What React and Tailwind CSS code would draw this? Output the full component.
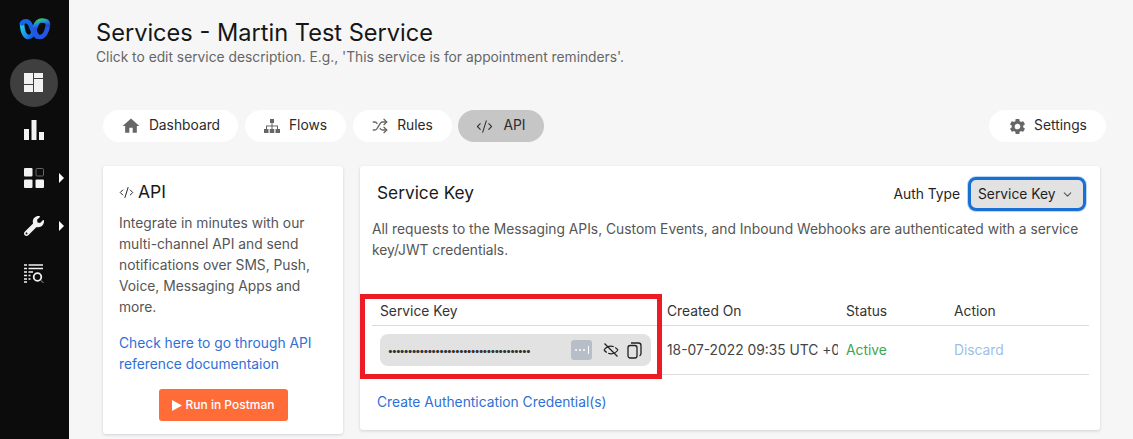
import { ChevronDown, CodeXml, Shuffle } from 'lucide-react';
import { FaWrench } from 'react-icons/fa';

const Logo = () => (
  <svg width="32" height="24" viewBox="0 0 32 24" fill="none">
    <defs>
      <linearGradient id="lg1" x1="0" y1="0" x2="1" y2="0.6">
        <stop offset="0" stopColor="#22d0e8" />
        <stop offset="0.6" stopColor="#1a8cf0" />
        <stop offset="1" stopColor="#1450e0" />
      </linearGradient>
      <linearGradient id="lg2" x1="0" y1="0" x2="0.6" y2="1">
        <stop offset="0" stopColor="#35d05a" />
        <stop offset="0.45" stopColor="#1f8fd8" />
        <stop offset="1" stopColor="#2340d8" />
      </linearGradient>
    </defs>
    <path d="M3 6.500C3.500 15 6 20 10 20c5 0 6-11 8-13.500" stroke="url(#lg1)" strokeWidth="4.500" strokeLinecap="round" />
    <path d="M3 6.500C5 3.500 9 3.500 11 7c2 3.500 3 10 7 12.500" stroke="#1565e6" strokeWidth="4.500" strokeLinecap="round" />
    <path d="M29 7c-.5 7-3.500 13-8 13-4 0-5.500-6-7-10" stroke="#2456e4" strokeWidth="4.500" strokeLinecap="round" />
    <path d="M16 10c1-4 4-6.500 7-6.500s6 1 6 4" stroke="url(#lg2)" strokeWidth="4.500" strokeLinecap="round" />
  </svg>
);

const DashIcon = () => (
  <svg width="20" height="20" viewBox="0 0 20 20" fill="#f2f2f2">
    <rect x="0" y="0" width="9" height="11" />
    <rect x="10" y="0" width="9" height="5" />
    <rect x="0" y="12" width="9" height="7" />
    <rect x="10" y="6" width="9" height="13" />
  </svg>
);

const ChartIcon = () => (
  <svg width="20" height="20" viewBox="0 0 20 20" fill="#f2f2f2">
    <rect x="0" y="9" width="5" height="11" />
    <rect x="7.500" y="0" width="5" height="20" />
    <rect x="15" y="12" width="5" height="8" />
  </svg>
);

const AppsIcon = () => (
  <svg width="20" height="20" viewBox="0 0 20 20" fill="#f2f2f2">
    <rect x="0" y="0" width="8.500" height="8.500" rx="1" />
    <rect x="12" y="0.500" width="7.500" height="7.500" rx="1" fill="none" stroke="#666" />
    <rect x="0" y="11.500" width="8.500" height="8.500" rx="1" />
    <rect x="11.500" y="11.500" width="8.500" height="8.500" rx="1" />
  </svg>
);

const LogSearchIcon = () => (
  <svg width="20" height="20" viewBox="0 0 20 20" fill="none" stroke="#f2f2f2">
    <path d="M0 1h3M4.500 1H19M0 4.500h3M4.500 4.500H19M0 8h3M4.500 8h4.500M0 11.500h3M4.500 11.500h2M0 15h3M4.500 15h2M0 18h3" strokeWidth="1.500" />
    <circle cx="13.500" cy="13" r="3.800" strokeWidth="1.800" />
    <path d="M16.500 16l3 3" strokeWidth="1" stroke="#999" />
  </svg>
);

const HomeIcon = () => (
  <svg width="20" height="20" viewBox="0 0 24 24" fill="#666" className="mr-[8px]">
    <path d="M10 20v-6h4v6h5v-8h3L12 3 2 12h3v8z" />
  </svg>
);

const GearIcon = () => (
  <svg width="19" height="19" viewBox="0 0 24 24" fill="#666" className="mr-[7px]">
    <path d="M19.140 12.940c.04-.3.06-.61.060-.94 0-.32-.02-.64-.07-.94l2.030-1.580a.49.49 0 0 0 .12-.61l-1.920-3.320a.49.49 0 0 0-.59-.22l-2.390.96c-.5-.38-1.030-.7-1.620-.94l-.36-2.540a.484.484 0 0 0-.48-.41h-3.840c-.24 0-.43.17-.47.41l-.36 2.540c-.59.24-1.130.57-1.620.94l-2.390-.96c-.22-.08-.47 0-.59.22L2.740 8.870c-.12.21-.08.47.12.61l2.030 1.580c-.05.3-.09.63-.09.94s.02.64.07.94l-2.030 1.580a.49.49 0 0 0-.12.61l1.920 3.320c.12.22.37.29.59.22l2.390-.96c.5.38 1.030.7 1.620.94l.36 2.540c.05.24.24.41.48.41h3.840c.24 0 .44-.17.47-.41l.36-2.540c.59-.24 1.130-.56 1.620-.94l2.390.96c.22.08.47 0 .59-.22l1.920-3.320c.12-.22.07-.47-.12-.61l-2.010-1.580zM12 15.600A3.610 3.610 0 0 1 8.400 12c0-1.980 1.620-3.600 3.600-3.600s3.600 1.620 3.600 3.600-1.620 3.600-3.600 3.600z" />
  </svg>
);

const FlowsIcon = () => (
  <svg width="16" height="16" viewBox="0 0 16 16" fill="#666" className="mr-[9px]">
    <rect x="6" y="1" width="4" height="4" />
    <rect x="0" y="11" width="4.500" height="4" />
    <rect x="5.750" y="11" width="4.500" height="4" />
    <rect x="11.500" y="11" width="4.500" height="4" />
    <path d="M7.500 5h1v2.500h5.500V11h-1V8.500H8.500V11h-1V8.500H3V11H2V7.500h5.500z" />
  </svg>
);

const MaskIcon = () => (
  <div className="flex h-[20px] w-[21px] items-center justify-center rounded-[3px] bg-[#b8bec8]">
    <span className="flex items-center gap-[2px]">
      <span className="h-[2px] w-[2px] rounded-full bg-white" />
      <span className="h-[2px] w-[2px] rounded-full bg-white" />
      <span className="h-[2px] w-[2px] rounded-full bg-white" />
      <span className="ml-[1px] h-[8px] w-[1px] bg-white" />
    </span>
  </div>
);

const EyeSlash = () => (
  <svg width="16" height="16" viewBox="0 0 16 16" fill="none" stroke="#222" strokeWidth="1.200" className="ml-[11px]">
    <path d="M1 8c2-2.600 4.300-3.800 7-3.800 1 0 1.900.2 2.800.5M15 8c-2 2.600-4.300 3.800-7 3.800-1 0-1.900-.2-2.800-.5M1 8c.9 1.100 1.800 1.900 2.800 2.500M15 8c-.9-1.100-1.800-1.900-2.800-2.500" />
    <path d="M1.500 1.500l13 13" />
  </svg>
);

const CopyIcon = () => (
  <svg width="15" height="17" viewBox="0 0 15 17" fill="none" stroke="#222" strokeWidth="1.300" className="ml-[8px]">
    <rect x="1" y="3.500" width="9" height="12.500" rx="2.200" />
    <path d="M4 1h7.500C13 1 14 2 14 3.500v8c0 1.100-.6 2-1.500 2.300" />
  </svg>
);

const Tab = ({ icon, label, active, className = '' }) => (
  <div
    className={`flex h-[32px] items-center justify-center rounded-full text-[13.800px] text-[#2b2b2b] ${
      active ? 'bg-[#c6c6c6]' : 'bg-white'
    } ${className}`}
  >
    {icon}
    <span className="pb-[1px]">{label}</span>
  </div>
);

const SideItem = ({ children, caret, className = '' }) => (
  <div className={`relative flex w-full items-center justify-center pr-[1px] ${className}`}>
    {children}
    {caret && (
      <span className="absolute left-[59px] top-1/2 h-0 w-0 -translate-y-1/2 border-y-[5px] border-l-[5px] border-y-transparent border-l-white" />
    )}
  </div>
);

export default function App() {
  return (
    <div className="relative flex h-[439px] w-[1133px] overflow-hidden bg-[#f6f6f7] font-['Inter',sans-serif] text-[#1f1f1f]">
      <aside className="flex w-[69px] shrink-0 flex-col items-center bg-[#0c0c0c] pt-[17px]">
        <Logo />
        <SideItem className="mt-[18px]">
          <div className="flex h-[48px] w-[48px] items-center justify-center rounded-full bg-[#3f3f3f]">
            <DashIcon />
          </div>
        </SideItem>
        <SideItem className="mt-[13px]"><ChartIcon /></SideItem>
        <SideItem caret className="mt-[28px]"><AppsIcon /></SideItem>
        <SideItem caret className="mt-[28px]">
          <FaWrench size={20} color="#f2f2f2" />
        </SideItem>
        <SideItem className="mt-[28px]"><LogSearchIcon /></SideItem>
      </aside>

      <main className="flex min-w-0 flex-1 flex-col">
        <header className="pl-[27px] pt-[17px]">
          <h1 className="text-[23.600px] leading-[32px] text-[#161616]">Services - Martin Test Service</h1>
          <p className="text-[13.800px] leading-[17px] text-[#666]">
            Click to edit service description. E.g., 'This service is for appointment reminders'.
          </p>
        </header>

        <nav className="mt-[44px] flex items-center pl-[34px] pr-[27px]">
          <Tab className="w-[135px]" label="Dashboard" icon={<HomeIcon />} />
          <Tab className="ml-[7px] w-[101px]" label="Flows" icon={<FlowsIcon />} />
          <Tab className="ml-[7px] w-[99px]" label="Rules" icon={<Shuffle size={16} color="#666" className="mr-[9px]" />} />
          <Tab active className="ml-[6px] w-[86px]" label="API" icon={<CodeXml size={17} color="#333" strokeWidth={1.500} className="mr-[10px]" />} />
          <Tab className="ml-auto w-[117px]" label="Settings" icon={<GearIcon />} />
        </nav>

        <div className="mt-[24px] flex items-start pl-[34px]">
          <section className="h-[268px] w-[240px] rounded-[3px] bg-white px-[16px] pt-[16px] shadow-[0_1px_3px_rgba(60,60,90,0.2)]">
            <h2 className="flex items-center text-[17.500px] leading-[20px] text-[#1a1a1a]">
              <CodeXml size={15} strokeWidth={1.500} className="mr-[4px]" />
              API
            </h2>
            <p className="mt-[11px] text-[13.800px] leading-[21px] text-[#555]">
              Integrate in minutes with our multi-channel API and send notifications over SMS, Push, Voice, Messaging Apps and more.
            </p>
            <a className="mt-[15px] block text-[13.800px] leading-[21px] text-[#2f6fd6]">
              Check here to go through API reference documentaion
            </a>
            <div className="mt-[14px] flex justify-center">
              <div className="flex h-[32px] w-[129px] items-center justify-center rounded-[3px] bg-[#ff6c37] text-[12px] font-medium text-white">
                <svg width="10" height="11" viewBox="0 0 10 11" fill="white" className="mr-[4px]">
                  <path d="M0 0l10 5.500L0 11z" />
                </svg>
                Run in Postman
              </div>
            </div>
          </section>

          <section className="ml-[17px] h-[264px] w-[740px] rounded-[3px] bg-white pl-[12px] pr-[11px] pt-[11px] shadow-[0_1px_3px_rgba(60,60,90,0.2)]">
            <div className="flex items-center justify-between pl-[5px] pr-[3px]">
              <h2 className="pb-[3px] text-[17.300px] text-[#1a1a1a]">Service Key</h2>
              <div className="flex items-center">
                <span className="mr-[8px] text-[13.800px]">Auth Type</span>
                <div className="flex h-[34px] w-[118px] items-center justify-between rounded-[8px] border-[3px] border-[#1a6fd4] bg-[#e2e2e2] pl-[7px] pr-[9px] text-[13.800px] shadow-[0_0_0_1px_#b9d6f5]">
                  <span>Service Key</span>
                  <ChevronDown size={13} color="#555" />
                </div>
              </div>
            </div>

            <p className="mt-[8px] text-[13.800px] leading-[21px] text-[#555]">
              All requests to the Messaging APIs, Custom Events, and Inbound Webhooks are authenticated with a service key/JWT credentials.
            </p>

            <div className="mt-[36px] text-[13.800px]">
              <div className="flex h-[29px] items-center border-b border-[#dcdcdc] text-[#333]">
                <div className="w-[295px] pl-[8px]">Service Key</div>
                <div className="w-[179px]">Created On</div>
                <div className="w-[108px]">Status</div>
                <div>Action</div>
              </div>
              <div className="flex h-[49px] items-center border-b border-[#dcdcdc]">
                <div className="w-[295px] pl-[8px]">
                  <div className="flex h-[32px] w-[271px] items-center rounded-[8px] bg-[#e2e2e2] pl-[8px] pr-[9px]">
                    <span className="flex-1 overflow-hidden whitespace-nowrap text-[10px] font-bold tracking-[-0.800px] text-[#333]">
                      ••••••••••••••••••••••••••••••••••••
                    </span>
                    <MaskIcon />
                    <EyeSlash />
                    <CopyIcon />
                  </div>
                </div>
                <div className="mr-[8px] w-[171px] overflow-hidden whitespace-nowrap text-[#444]">18-07-2022 09:35 UTC +0530</div>
                <div className="w-[108px] text-[#3aa655]">Active</div>
                <div className="text-[#9dbfe6]">Discard</div>
              </div>
            </div>

            <a className="mt-[17px] block pl-[5px] text-[13.800px] text-[#2f6fd6]">Create Authentication Credential(s)</a>
          </section>
        </div>
      </main>

      <div className="absolute left-[360px] top-[294px] h-[85px] w-[302px] border-[5px] border-[#ed1c24]" />
    </div>
  );
}
